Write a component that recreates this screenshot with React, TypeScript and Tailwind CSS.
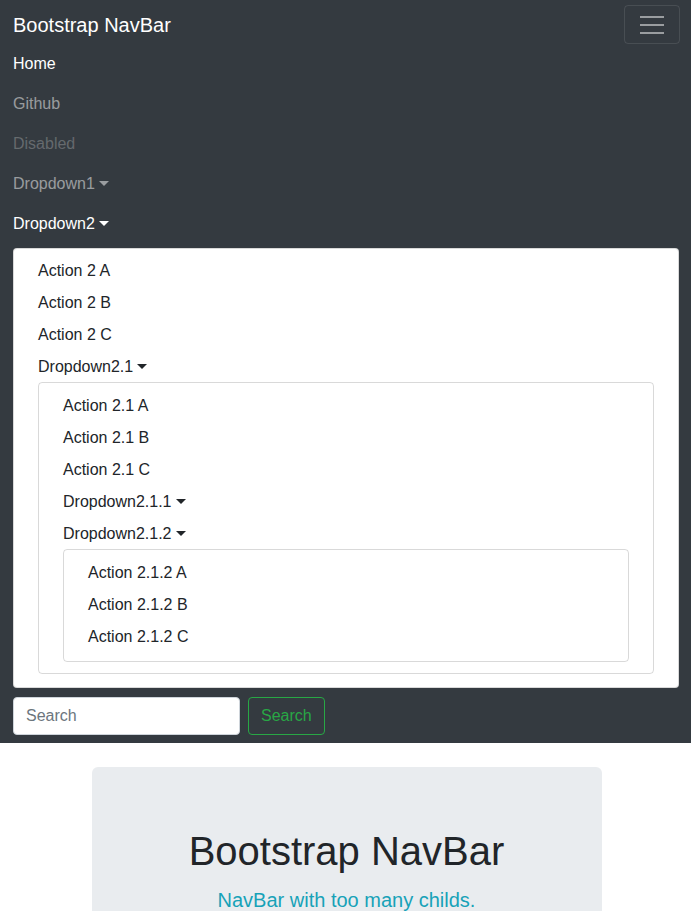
import React from 'react';

const Caret = ({ className = '' }: { className?: string }) => (
  <svg viewBox="0 0 10 5" className={`inline-block w-[10px] h-[5px] ml-1 align-[3px] ${className}`} fill="currentColor">
    <path d="M0 0h10L5 5z" />
  </svg>
);

const Item = ({ children }: { children: React.ReactNode }) => (
  <a href="#" className="block px-6 py-1 leading-6 text-[#212529] whitespace-nowrap">
    {children}
  </a>
);

export default function App() {
  return (
    <div className="min-h-screen bg-white text-base text-[#212529]" style={{ fontFamily: '"Liberation Sans", Arial, sans-serif' }}>
      <nav className="bg-[#343a40] pt-[5px] pb-2 pl-[13px] pr-[11px]">
        <div className="flex items-center justify-between">
          <a href="#" className="text-xl leading-[30px] text-white">Bootstrap NavBar</a>
          <button className="w-[56px] h-[39px] flex flex-col items-center justify-center gap-[6px] border border-white/10 rounded">
            <span className="block w-6 h-[2px] bg-white/50" />
            <span className="block w-6 h-[2px] bg-white/50" />
            <span className="block w-6 h-[2px] bg-white/50" />
          </button>
        </div>

        <ul className="flex flex-col">
          <li><a href="#" className="block py-2 leading-6 text-white">Home</a></li>
          <li><a href="#" className="block py-2 leading-6 text-white/50">Github</a></li>
          <li><span className="block py-2 leading-6 text-white/25">Disabled</span></li>
          <li>
            <a href="#" className="block py-2 leading-6 text-white/50">Dropdown1<Caret /></a>
          </li>
          <li>
            <a href="#" className="block py-2 leading-6 text-white">Dropdown2<Caret /></a>
            <div className="mt-1 bg-white border border-black/15 rounded pt-[5px] pb-[10px] mr-px">
              <div className="pt-px">
                <Item>Action 2 A</Item>
              </div>
              <Item>Action 2 B</Item>
              <Item>Action 2 C</Item>
              <div className="-mb-px">
                <Item>Dropdown2.1<Caret /></Item>
              </div>
              <div className="mx-6 mb-[3px] border border-black/15 rounded pt-[7px] pb-2">
                <Item>Action 2.1 A</Item>
                <Item>Action 2.1 B</Item>
                <Item>Action 2.1 C</Item>
                <Item>Dropdown2.1.1<Caret /></Item>
                <div className="-mb-px">
                  <Item>Dropdown2.1.2<Caret /></Item>
                </div>
                <div className="mx-6 mb-[3px] border border-black/15 rounded pt-[7px] pb-2">
                  <Item>Action 2.1.2 A</Item>
                  <Item>Action 2.1.2 B</Item>
                  <Item>Action 2.1.2 C</Item>
                </div>
              </div>
            </div>
          </li>
        </ul>

        <form className="flex gap-2 mt-[9px]" onSubmit={(e) => e.preventDefault()}>
          <input
            type="search"
            placeholder="Search"
            className="w-[227px] h-[38px] px-3 bg-white border border-[#ced4da] rounded text-base text-[#495057] placeholder:text-[#6c757d] outline-none"
          />
          <button type="submit" className="h-[38px] px-3 border border-[#28a745] rounded text-[#28a745] text-base">
            Search
          </button>
        </form>
      </nav>

      <div className="max-w-[540px] mx-auto pl-4 pr-[14px] mt-6">
        <div className="bg-[#e9ecef] rounded-md px-8 pt-[60px] pb-16 text-center">
          <h1 className="text-[40px] leading-[48px] mb-[10px]">Bootstrap NavBar</h1>
          <p className="text-xl leading-[30px] text-[#17a2b8]">NavBar with too many childs.</p>
        </div>
      </div>
    </div>
  );
}
